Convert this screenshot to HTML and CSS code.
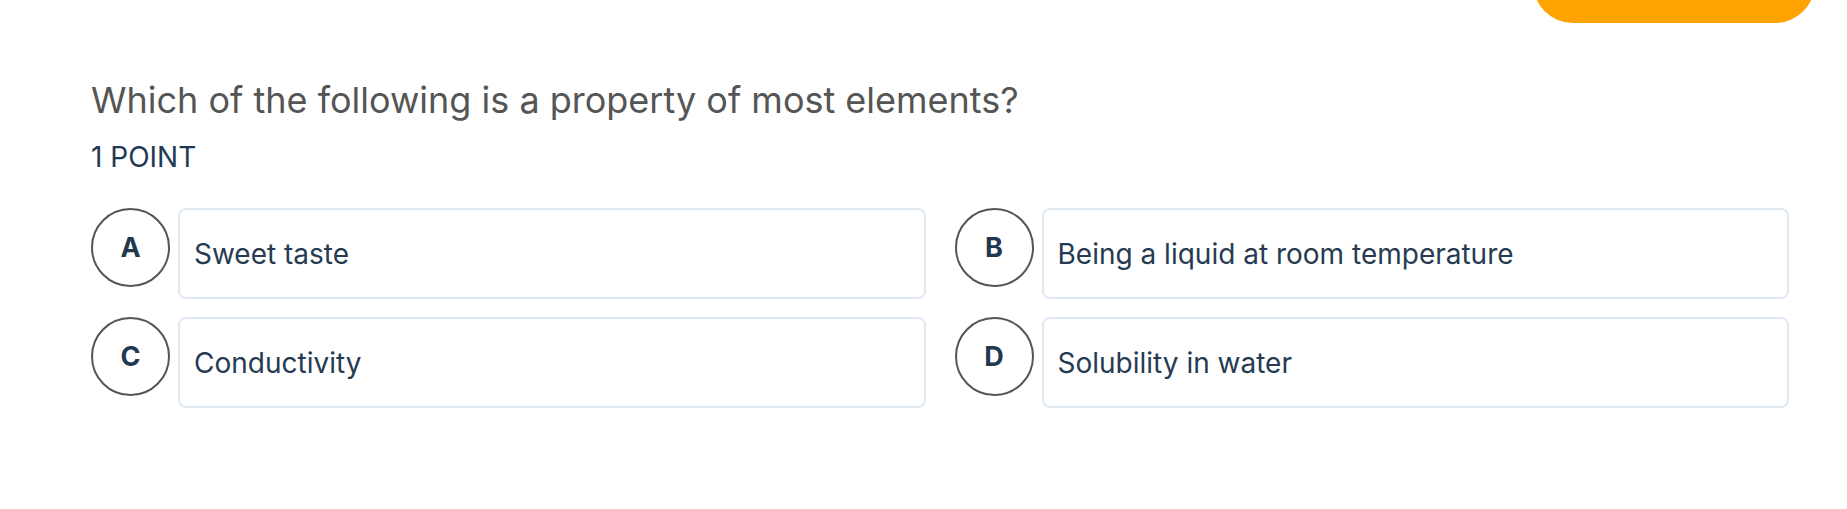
FILE: index.html
```html
<!DOCTYPE html>
<html>
<head>
    <meta charset="UTF-8">
    <meta name="viewport" content="width=device-width, initial-scale=1.0">
    <title>Quiz</title>
    <link rel="stylesheet" href="styles.css">
</head>

<body>
<div class="topbar">
    <button class="submit"></button>
</div>

<div class="quiz">
    <h1 class="question">Which of the following is a property of most elements?</h1>
    <div class="points">1 POINT</div>

    <div class="options">
        <div class="option">
            <span class="option__key">A</span>
            <div class="option__card">Sweet taste</div>
        </div>
        <div class="option">
            <span class="option__key">B</span>
            <div class="option__card">Being a liquid at room temperature</div>
        </div>
        <div class="option">
            <span class="option__key">C</span>
            <div class="option__card">Conductivity</div>
        </div>
        <div class="option">
            <span class="option__key">D</span>
            <div class="option__card">Solubility in water</div>
        </div>
    </div>
</div>
</body>
</html>
```

FILE: styles.css
```css
* {
    padding: 0;
    margin: 0;
    box-sizing: border-box;
}

html {
    height: 100%;
}

body {
    height: 100%;
    font-family: Inter, "Noto Sans", sans-serif;
    background-color: white;
    overflow: hidden;
}

.topbar {
    display: flex;
    justify-content: flex-end;
    padding-right: 32px;
}

.submit {
    width: 282px;
    height: 80px;
    margin-top: -57px;
    border: none;
    border-radius: 40px;
    background-color: #ffa300;
}

.quiz {
    padding: 52px 58px 0 91px;
}

.question {
    font-size: 36px;
    font-weight: 400;
    line-height: 50px;
    color: #555;
}

.points {
    margin-top: 14px;
    font-size: 28px;
    line-height: 36px;
    color: #1f3a52;
}

.options {
    display: grid;
    grid-template-columns: 1fr 1fr;
    column-gap: 29px;
    row-gap: 18px;
    margin-top: 33px;
}

.option {
    display: flex;
    gap: 8px;
}

.option__key {
    flex: none;
    width: 79px;
    height: 79px;
    display: flex;
    align-items: center;
    justify-content: center;
    border: 2px solid #555;
    border-radius: 50%;
    font-size: 27px;
    font-weight: 700;
    color: #22384f;
}

.option__card {
    flex: 1;
    height: 91px;
    display: flex;
    align-items: center;
    padding-left: 14px;
    border: 2px solid #dfe9f3;
    border-radius: 8px;
    font-size: 28px;
    color: #263b51;
}
```
